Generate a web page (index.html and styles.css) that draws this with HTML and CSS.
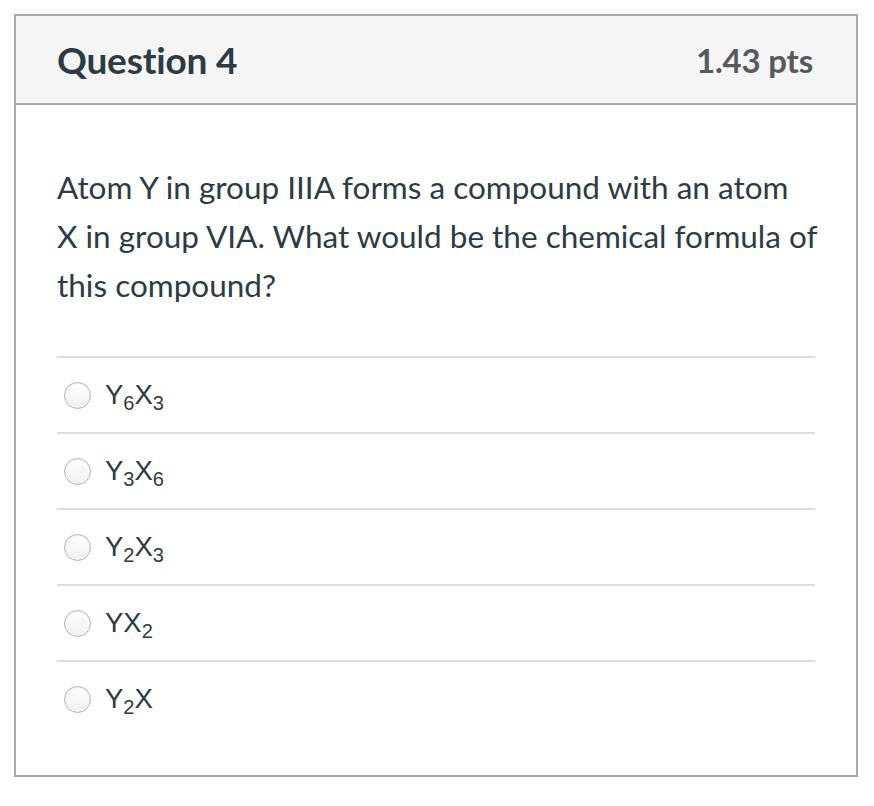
FILE: index.html
```html
<!DOCTYPE html>
<html>
<head>
<meta charset="utf-8">
<link rel="stylesheet" href="styles.css">
</head>
<body>
<div class="question">
  <div class="q-header">
    <h2 class="q-title">Question 4</h2>
    <div class="q-points">1.43 pts</div>
  </div>
  <div class="q-body">
    <p class="q-text">Atom Y in group IIIA forms a compound with an atom<br>X in group VIA. What would be the chemical formula of this compound?</p>
    <ul class="answers">
      <li class="answer"><span class="radio"></span><span class="label">Y<sub>6</sub>X<sub>3</sub></span></li>
      <li class="answer"><span class="radio"></span><span class="label">Y<sub>3</sub>X<sub>6</sub></span></li>
      <li class="answer"><span class="radio"></span><span class="label">Y<sub>2</sub>X<sub>3</sub></span></li>
      <li class="answer"><span class="radio"></span><span class="label">YX<sub>2</sub></span></li>
      <li class="answer"><span class="radio"></span><span class="label">Y<sub>2</sub>X</span></li>
    </ul>
  </div>
</div>
</body>
</html>
```
FILE: styles.css
```css
html, body {
  margin: 0;
  padding: 0;
  background: #fff;
}
body {
  padding: 14px 16px 0 14px;
  font-family: Lato, "Liberation Sans", sans-serif;
  color: #2d3b45;
}
.question {
  width: 840px;
  border: 2px solid #aaaaaa;
  background: #fff;
}
.q-header {
  display: flex;
  align-items: center;
  justify-content: space-between;
  height: 87px;
  padding: 0 43px 0 41px;
  background: #f5f5f5;
  border-bottom: 2px solid #aaaaaa;
}
.q-title {
  margin: 0;
  font-size: 37px;
  font-weight: 700;
  color: #2d3b45;
  letter-spacing: -0.2px;
}
.q-points {
  font-size: 33px;
  font-weight: 700;
  color: #555a5e;
  letter-spacing: -0.2px;
}
.q-body {
  padding: 58px 41px 39px 41px;
}
.q-text {
  margin: 0 -12px 46px 0;
  font-size: 31.5px;
  line-height: 49px;
}
.answers {
  list-style: none;
  margin: 0;
  padding: 0;
}
.answer {
  display: flex;
  align-items: center;
  height: 74px;
  border-top: 2px solid #dddddd;
  font-family: "Liberation Sans", Arial, sans-serif;
  font-size: 27.5px;
  color: #2d3b45;
}
.radio {
  width: 25px;
  height: 25px;
  margin-left: 7px;
  margin-right: 14px;
  border-radius: 50%;
  border: 1.5px solid #b5b5b5;
  background: linear-gradient(#ffffff, #f0f0f0);
  box-shadow: inset 0 1px 1px rgba(0,0,0,0.06);
  flex: none;
}
.label sub {
  font-size: 20px;
  vertical-align: -6px;
  line-height: 0;
}
```
